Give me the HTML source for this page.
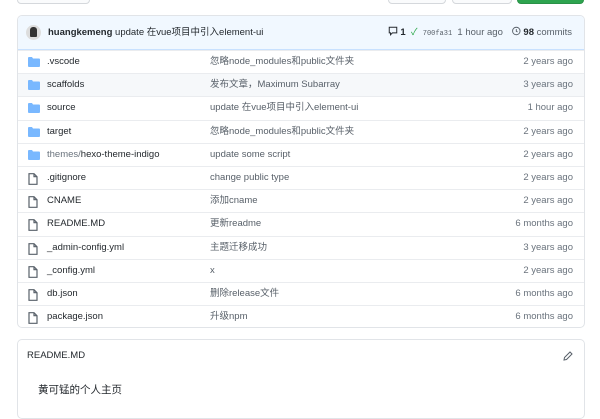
<!DOCTYPE html>
<html><head><meta charset="utf-8"><style>
*{margin:0;padding:0;box-sizing:border-box}
body{width:600px;height:400px;overflow:hidden;background:#fff;font-family:"Liberation Sans","Noto Sans CJK SC",sans-serif;font-size:9.5px;color:#24292e;position:relative}
.btn{position:absolute;top:-10px;height:14px;border:1px solid #d5d8dc;border-radius:4px;background:#fafbfc}
.box{position:absolute;left:17px;top:15px;width:568px;height:313px;border:1px solid #e1e4e8;border-radius:5px;overflow:hidden}
.hd{height:34px;background:#f1f8ff;border-bottom:1px solid #c8e1ff;position:relative}
.hd>span{position:absolute;top:0;line-height:34px;white-space:nowrap}
.row{height:23.2px;border-top:1px solid #eaecef;position:relative}
.row:first-of-type{border-top:none}
.row>span{position:absolute;top:0;line-height:22px;height:22px;white-space:nowrap}
.n{left:29px}.m{left:192px;color:#586069}.d{right:11px;color:#6a737d}
.ic{position:absolute;left:10px;top:6px}
.rd{position:absolute;left:17px;top:339px;width:568px;height:80px;border:1px solid #e1e4e8;border-radius:5px}
</style></head><body>
<div class="btn" style="left:17px;width:73px"></div>
<div class="btn" style="left:388px;width:58px"></div>
<div class="btn" style="left:452px;width:60px"></div>
<div class="btn" style="left:517px;width:67px;background:#2ea44f;border-color:#2a9147"></div>
<div class="box">
<div class="hd">
<div style="position:absolute;left:8px;top:9px;width:15px;height:15px;border-radius:50%;background:#ddd;overflow:hidden"><div style="position:absolute;left:4px;top:2px;width:7px;height:10px;background:#333;border-radius:3px 3px 1px 1px"></div></div>
<span style="left:30px"><b>huangkemeng</b> update 在vue项目中引入element-ui</span>
<span style="right:12px;color:#586069">
<svg width="10" height="10" viewBox="0 0 16 16" style="vertical-align:-1px"><path d="M2 2h12v9H7l-3 3v-3H2z" fill="none" stroke="#24292e" stroke-width="1.6"/></svg> <b style="color:#24292e">1</b> &nbsp;<span style="color:#28a745">✓</span> &nbsp;<span style="font-family:'Liberation Mono',monospace;font-size:7px">700fa31</span> &nbsp;1 hour ago &nbsp;&nbsp;<svg width="10" height="10" viewBox="0 0 16 16" style="vertical-align:-1px"><circle cx="8.5" cy="8" r="6" fill="none" stroke="#586069" stroke-width="1.5"/><path d="M8.5 5v3.5l2 1" fill="none" stroke="#586069" stroke-width="1.5"/></svg> <b style="color:#24292e">98</b> commits</span>
</div>
<div class="row"><svg class="ic" width="12" height="10" viewBox="0 0 12 10"><path d="M0 1q0-1 1-1h3l1 1.5h6q1 0 1 1V9q0 1-1 1H1q-1 0-1-1z" fill="#79b8ff"/></svg><span class="n">.vscode</span><span class="m">忽略node_modules和public文件夹</span><span class="d">2 years ago</span></div>
<div class="row" style="background:#f6f8fa"><svg class="ic" width="12" height="10" viewBox="0 0 12 10"><path d="M0 1q0-1 1-1h3l1 1.5h6q1 0 1 1V9q0 1-1 1H1q-1 0-1-1z" fill="#79b8ff"/></svg><span class="n">scaffolds</span><span class="m">发布文章，Maximum Subarray</span><span class="d">3 years ago</span></div>
<div class="row"><svg class="ic" width="12" height="10" viewBox="0 0 12 10"><path d="M0 1q0-1 1-1h3l1 1.5h6q1 0 1 1V9q0 1-1 1H1q-1 0-1-1z" fill="#79b8ff"/></svg><span class="n">source</span><span class="m">update 在vue项目中引入element-ui</span><span class="d">1 hour ago</span></div>
<div class="row"><svg class="ic" width="12" height="10" viewBox="0 0 12 10"><path d="M0 1q0-1 1-1h3l1 1.5h6q1 0 1 1V9q0 1-1 1H1q-1 0-1-1z" fill="#79b8ff"/></svg><span class="n">target</span><span class="m">忽略node_modules和public文件夹</span><span class="d">2 years ago</span></div>
<div class="row"><svg class="ic" width="12" height="10" viewBox="0 0 12 10"><path d="M0 1q0-1 1-1h3l1 1.5h6q1 0 1 1V9q0 1-1 1H1q-1 0-1-1z" fill="#79b8ff"/></svg><span class="n"><span style="color:#6a737d">themes/</span>hexo-theme-indigo</span><span class="m">update some script</span><span class="d">2 years ago</span></div>
<div class="row"><svg class="ic" width="10" height="12" viewBox="0 0 10 12"><path d="M1 .7h5l3 3v7.6H1z M6 .7v3h3" fill="none" stroke="#586069" stroke-width="1.2"/></svg><span class="n">.gitignore</span><span class="m">change public type</span><span class="d">2 years ago</span></div>
<div class="row"><svg class="ic" width="10" height="12" viewBox="0 0 10 12"><path d="M1 .7h5l3 3v7.6H1z M6 .7v3h3" fill="none" stroke="#586069" stroke-width="1.2"/></svg><span class="n">CNAME</span><span class="m">添加cname</span><span class="d">2 years ago</span></div>
<div class="row"><svg class="ic" width="10" height="12" viewBox="0 0 10 12"><path d="M1 .7h5l3 3v7.6H1z M6 .7v3h3" fill="none" stroke="#586069" stroke-width="1.2"/></svg><span class="n">README.MD</span><span class="m">更新readme</span><span class="d">6 months ago</span></div>
<div class="row"><svg class="ic" width="10" height="12" viewBox="0 0 10 12"><path d="M1 .7h5l3 3v7.6H1z M6 .7v3h3" fill="none" stroke="#586069" stroke-width="1.2"/></svg><span class="n">_admin-config.yml</span><span class="m">主题迁移成功</span><span class="d">3 years ago</span></div>
<div class="row"><svg class="ic" width="10" height="12" viewBox="0 0 10 12"><path d="M1 .7h5l3 3v7.6H1z M6 .7v3h3" fill="none" stroke="#586069" stroke-width="1.2"/></svg><span class="n">_config.yml</span><span class="m">x</span><span class="d">2 years ago</span></div>
<div class="row"><svg class="ic" width="10" height="12" viewBox="0 0 10 12"><path d="M1 .7h5l3 3v7.6H1z M6 .7v3h3" fill="none" stroke="#586069" stroke-width="1.2"/></svg><span class="n">db.json</span><span class="m">删除release文件</span><span class="d">6 months ago</span></div>
<div class="row"><svg class="ic" width="10" height="12" viewBox="0 0 10 12"><path d="M1 .7h5l3 3v7.6H1z M6 .7v3h3" fill="none" stroke="#586069" stroke-width="1.2"/></svg><span class="n">package.json</span><span class="m">升级npm</span><span class="d">6 months ago</span></div>
</div>
<div class="rd">
<span style="position:absolute;left:9px;top:10px">README.MD</span>
<svg style="position:absolute;right:11px;top:11px" width="10" height="10" viewBox="0 0 10 10"><path d="M1 9l.5-2.5L7 1l2 2-5.5 5.5z" fill="none" stroke="#586069" stroke-width="1"/></svg>
<span style="position:absolute;left:20px;top:42px;font-size:10.5px">黄可锰的个人主页</span>
</div>
</body></html>
